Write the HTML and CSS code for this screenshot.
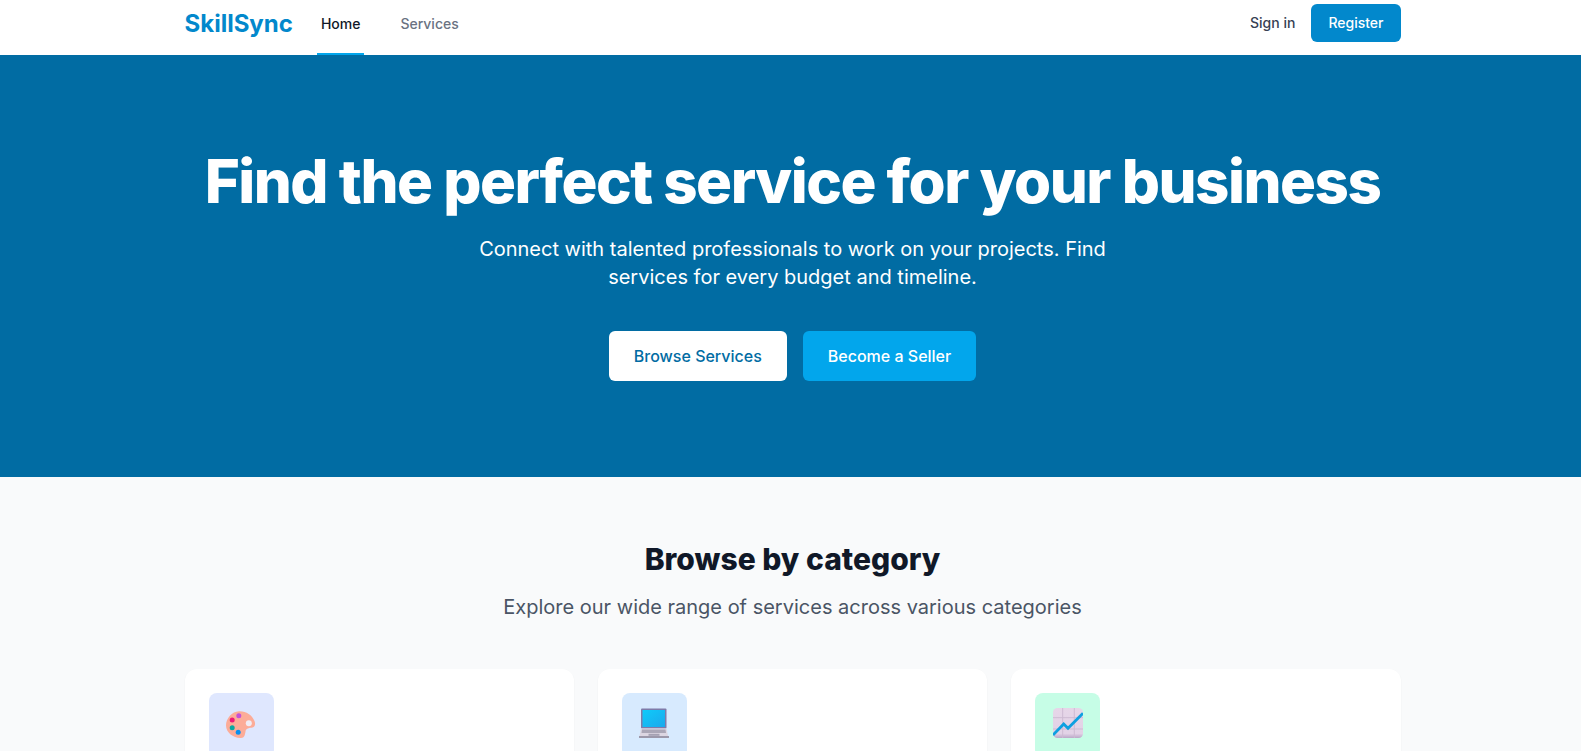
FILE: index.html
```html
<!DOCTYPE html>
<html lang="en">
<head>
<meta charset="utf-8">
<title>SkillSync</title>
<link rel="stylesheet" href="styles.css">
</head>
<body>
<header class="site-header">
  <div class="container header-row">
    <div class="header-left">
      <a class="logo" href="#">SkillSync</a>
      <nav class="main-nav">
        <a class="nav-link nav-active" href="#">Home</a>
        <a class="nav-link" href="#">Services</a>
      </nav>
    </div>
    <div class="header-right">
      <a class="signin" href="#">Sign in</a>
      <a class="register" href="#">Register</a>
    </div>
  </div>
</header>
<section class="hero">
  <h1 class="hero-title">Find the perfect service for your business</h1>
  <p class="hero-sub">Connect with talented professionals to work on your projects. Find services for every budget and timeline.</p>
  <div class="hero-actions">
    <a class="btn btn-white" href="#">Browse Services</a>
    <a class="btn btn-sky" href="#">Become a Seller</a>
  </div>
</section>
<section class="categories">
  <div class="container">
    <h2 class="cat-title">Browse by category</h2>
    <p class="cat-sub">Explore our wide range of services across various categories</p>
    <div class="card-grid">
      <article class="card">
        <div class="card-icon icon-indigo">
          <svg class="emoji" viewBox="0 0 30 30" aria-hidden="true">
            <path d="M13 3.300C20 3 26 7 28.500 13C29.700 16 29 19 26.500 19.500C23.500 20 20 20 19.500 23.500C19 26.500 18.500 30 15 30C8 30.200 0 25 0 17.500C0 10.500 6 3.600 13 3.300Z" fill="#fcac98"/>
            <circle cx="22.800" cy="15.300" r="3" fill="#f1ecf4"/>
            <circle cx="12.800" cy="7.700" r="2.500" fill="#c450d8"/>
            <circle cx="6.200" cy="12" r="2.500" fill="#ee1a78"/>
            <circle cx="6.200" cy="19.700" r="2.500" fill="#08a8a0"/>
            <circle cx="12.200" cy="24.300" r="2.500" fill="#0a8fee"/>
          </svg>
        </div>
      </article>
      <article class="card">
        <div class="card-icon icon-blue">
          <svg class="emoji" viewBox="0 0 30 30" aria-hidden="true">
            <defs>
              <linearGradient id="screen" x1="0" y1="0" x2="1" y2="1">
                <stop offset="0" stop-color="#0ecbfa"/>
                <stop offset="1" stop-color="#1ba8ec"/>
              </linearGradient>
            </defs>
            <rect x="2" y="0.500" width="25.500" height="20" rx="1" fill="#7f7aa8"/>
            <rect x="3.500" y="2" width="22.500" height="17" fill="url(#screen)"/>
            <path d="M2 20.500h25.500l1.500 7.500H0.500z" fill="#dcd6e2"/>
            <path d="M3 21.500h23.500l.5 3.500H2.500z" fill="#aaa6b6"/>
            <rect x="9.500" y="25.800" width="11" height="2" fill="#a5a1b2"/>
            <rect x="0" y="28" width="30" height="2" fill="#9c98aa"/>
          </svg>
        </div>
      </article>
      <article class="card">
        <div class="card-icon icon-green">
          <svg class="emoji" viewBox="0 0 30 30" aria-hidden="true">
            <defs>
              <linearGradient id="chart" x1="0" y1="0" x2="0" y2="1">
                <stop offset="0" stop-color="#e6d6e8"/>
                <stop offset="0.85" stop-color="#e2d2e6"/>
                <stop offset="1" stop-color="#bba8c8"/>
              </linearGradient>
            </defs>
            <rect x="0" y="0" width="30" height="30" rx="4.500" fill="url(#chart)"/>
            <path d="M0 9.700h30M0 21h30M9.700 0v30M21.300 0v30" stroke="#cdbbd2" stroke-width="1" fill="none"/>
            <path d="M0 27 10.700 16l4.300 4.300L30 5.300" stroke="#0ea0e0" stroke-width="2.800" fill="none"/>
          </svg>
        </div>
      </article>
    </div>
  </div>
</section>
</body>
</html>
```
FILE: styles.css
```css
* { box-sizing: border-box; }
html, body { margin: 0; padding: 0; }
body { font-family: Inter, "Liberation Sans", sans-serif; background: #f9fafb; color: #101828; }
a { text-decoration: none; }
.container { width: 1280px; margin: 0 auto; padding: 0 32px; }

.site-header { background: #fff; height: 55px; padding-left: 4px; }
.header-row { display: flex; justify-content: space-between; height: 55px; }
.header-left { display: flex; align-items: stretch; }
.logo { font-size: 24px; font-weight: 700; color: #0288cc; line-height: 47px; }
.main-nav { display: flex; gap: 32px; margin-left: 24px; }
.nav-link { display: flex; align-items: center; padding: 0 4px 7px; font-size: 14px; font-weight: 500; color: #6a7282; border-bottom: 2px solid transparent; }
.nav-active { color: #101828; border-bottom-color: #02a6ec; }
.header-right { display: flex; align-items: flex-start; gap: 16px; padding-top: 4px; }
.signin { font-size: 14px; font-weight: 500; color: #364153; line-height: 38px; }
.register { display: block; height: 38px; line-height: 38px; padding: 0 17px; background: #0288cc; color: #fff; font-size: 14px; font-weight: 500; border-radius: 6px; }

.hero { background: #016ca3; height: 422px; padding: 96px 0 0 4px; text-align: center; color: #fff; }
.hero-title { margin: 0; font-size: 60px; line-height: 60px; font-weight: 800; letter-spacing: -1.500px; }
.hero-sub { width: 672px; margin: 24px auto 0; font-size: 20px; line-height: 28px; }
.hero-actions { display: flex; justify-content: center; gap: 16px; margin-top: 40px; }
.btn { display: block; height: 50px; line-height: 50px; padding: 0 25px; font-size: 16px; font-weight: 500; border-radius: 6px; }
.btn-white { background: #fff; color: #016ca3; }
.btn-sky { background: #02a6ec; color: #fff; }

.categories { padding: 64px 0 0 4px; }
.cat-title { margin: 0; text-align: center; font-size: 30px; line-height: 36px; font-weight: 800; }
.cat-sub { margin: 16px 0 0; text-align: center; font-size: 20px; line-height: 28px; color: #4a5565; }
.card-grid { display: grid; grid-template-columns: repeat(3, 1fr); gap: 24px; margin-top: 48px; }
.card { background: #fff; border-radius: 12px; padding: 24px; height: 180px; box-shadow: 0 1px 2px rgba(0,0,0,.05); }
.card-icon { width: 65px; height: 65px; padding-bottom: 5px; border-radius: 8px; display: flex; align-items: center; justify-content: center; }
.icon-indigo { background: #dfe7fe; }
.icon-blue { background: #d7eafe; }
.icon-green { background: #c6fde6; }
.emoji { width: 30px; height: 30px; }
```
